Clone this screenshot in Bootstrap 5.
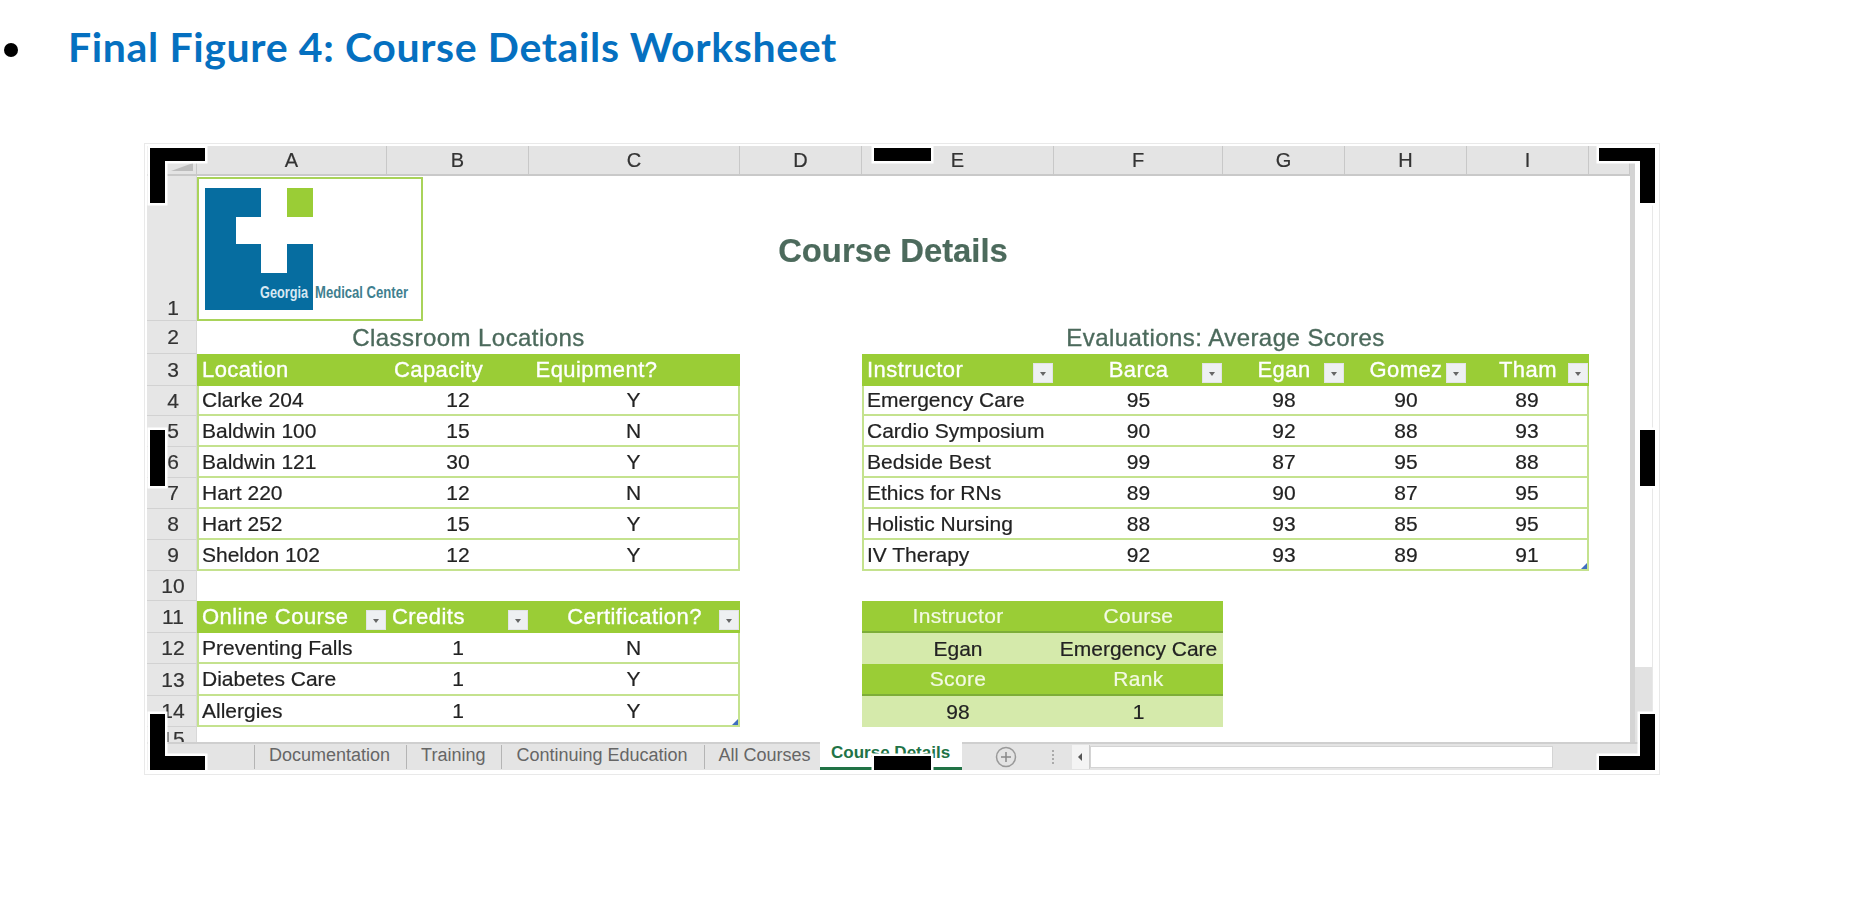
<!DOCTYPE html>
<html lang="en">
<head>
<meta charset="utf-8">
<title>Final Figure 4: Course Details Worksheet</title>
<link href="https://cdn.jsdelivr.net/npm/bootstrap@5.3.0/dist/css/bootstrap.min.css" rel="stylesheet">
<style>
body{background:#fff;font-family:"Liberation Sans",Arial,sans-serif;overflow:hidden}
.doc-title{height:143px;padding-top:19px}
.doc-bullet{width:14px;height:14px;margin:24px 0 0 4px;background:#000;flex:none}
.doc-head{margin:0 0 0 50px;font:700 41px/56px Lato,sans-serif;letter-spacing:.63px;color:#0570c0;white-space:nowrap}
.shot-frame{margin-left:144px;width:1516px;height:632px;border:1px solid #e9e9e9;padding:2px 0 5px 2px;background:#fff}
.shot-blur{filter:blur(.45px)}
.sheet-view{width:1488px;height:596px;overflow:hidden;border-right:5px solid #d4d4d4;flex:none}
.sheet-grid{border-collapse:separate;border-spacing:0;table-layout:fixed;width:1483px;font-size:21px;color:#222;-webkit-text-stroke:.2px currentColor}
.sheet-grid td,.sheet-grid th{padding:0;height:31px;line-height:24px;white-space:nowrap;overflow:hidden;font-weight:400}
.c-rh{width:50px}.c-a{width:190px}.c-b{width:142px}.c-c{width:211px}.c-d{width:122px}.c-e{width:192px}.c-f{width:169px}.c-g{width:122px}.c-h{width:122px}.c-i{width:122px}.c-x{width:41px}
.sheet-grid .col-hd{height:30px;background:#e4e4e4;border-right:1px solid #c8c8c8;border-bottom:2px solid #c9c9c9;text-align:center;font-size:20px;color:#333;position:relative}
.corner-tri{position:absolute;right:3px;bottom:3px;border-style:solid;border-width:0 0 8px 22px;border-color:transparent transparent #bdbdbd transparent}
.sheet-grid .row-hd{background:#e6e6e6;border-bottom:1px solid #d2d2d2;border-right:1px solid #d8d8d8;text-align:center;padding-left:3px;font-size:21px;color:#333}
.row-logo td{height:145px!important}
.row-30 td{height:30px!important}
.row-32 td{height:32px!important}
.row-33 td{height:33px!important}
.row-cut td{height:17px!important;vertical-align:top}
.sheet-grid .sheet-title{font-size:32.8px;font-weight:700;color:#4c6a5c;vertical-align:middle;padding-top:4px}
.sec-title{font-size:24px;letter-spacing:.45px;color:#4c6a5c;-webkit-text-stroke:.35px currentColor}
.tb-h{background:#9acd36;color:#fff;font-size:22px;letter-spacing:.45px;-webkit-text-stroke:.35px currentColor}
.sheet-grid .lead-cell{padding-left:5px}
.sheet-grid .shift-b{padding-right:39px}
.sheet-grid .shift-c{padding-right:76px}
.tb-c{border-bottom:2px solid #c4e28e}
.tb-l{border-left:2px solid #c4e28e}
.tb-r{border-right:2px solid #c4e28e}
.sheet-grid .tb-p{padding-left:3px}
.card-h{background:#9acd36;color:#f3f9e4;font-size:21px;letter-spacing:.35px;border-bottom:2px solid #7dad38}
.card-d{background:#d5eaab;color:#222}
.flt-cell{position:relative}
.flt-btn{position:absolute;right:1px;bottom:3px;width:20px;height:20px;background:#eef0f2;border:1px solid #e2e4e6}
.flt-btn::after{content:"";position:absolute;left:6px;top:8px;border:3.5px solid transparent;border-top:4px solid #666;border-bottom:0}
.tri-corner{position:absolute;right:0;bottom:0;border-style:solid;border-width:0 0 6px 6px;border-color:transparent transparent #3f6fc0 transparent}
.scroll-col{width:18px;background:#e2e2e2;height:596px;flex:none;border-right:1px solid #e8e8e8}
.scroll-thumb{height:521px;background:#fff}
.tab-bar{height:28px;width:1506px;background:#e4e4e4;border-top:2px solid #cfcfcf;padding-left:107px;font-size:18px;color:#666}
.tab-item{height:24px;padding:0 16px 0 14px;border-left:1px solid #b4b4b4;line-height:20px;white-space:nowrap}
.tab-on{height:28px;margin-top:-2px;width:142px;background:#fff;border-bottom:3px solid #217346;color:#217346;font-size:17px;font-weight:700;line-height:22px;text-align:center;white-space:nowrap;flex:none;margin-left:-7px}
.tab-add{width:22px;height:22px;margin-left:33px;flex:none}
.tab-dots{width:3px;height:14px;margin-left:35px;border-left:2px dotted #aaa;flex:none}
.tab-left{width:18px;height:24px;margin-left:17px;background:#f4f4f4;flex:none;border-right:1px solid #ccc}
.tab-track{width:463px;height:22px;background:#fff;border:1px solid #d4d4d4;flex:none}
.logo-layer{left:52px;top:33px}
.hand-layer{position:absolute;left:-1px;top:-1px;width:1516px;height:632px;pointer-events:none;overflow:visible}
</style>
</head>
<body>
<div class="doc-title d-flex align-items-start">
  <span class="doc-bullet rounded-circle"></span>
  <h1 class="doc-head">Final Figure 4: Course Details Worksheet</h1>
</div>

<div class="shot-frame position-relative">
  <div class="shot-blur">
    <div class="d-flex">
      <div class="sheet-view">
        <table class="sheet-grid position-relative">
          <colgroup><col class="c-rh"><col class="c-a"><col class="c-b"><col class="c-c"><col class="c-d"><col class="c-e"><col class="c-f"><col class="c-g"><col class="c-h"><col class="c-i"><col class="c-x"></colgroup>
          <tr><th class="col-hd"><span class="corner-tri"></span></th><th class="col-hd">A</th><th class="col-hd">B</th><th class="col-hd">C</th><th class="col-hd">D</th><th class="col-hd">E</th><th class="col-hd">F</th><th class="col-hd">G</th><th class="col-hd">H</th><th class="col-hd">I</th><th class="col-hd"></th></tr>
          <tr class="row-logo">
            <td class="row-hd align-bottom">1</td>
            <td colspan="9" class="sheet-title text-center">Course Details</td><td></td>
          </tr>
          <tr class="row-33">
            <td class="row-hd">2</td><td colspan="3" class="sec-title text-center">Classroom Locations</td><td></td><td colspan="5" class="sec-title text-center">Evaluations: Average Scores</td><td></td>
          </tr>
          <tr class="row-32">
            <td class="row-hd">3</td><td class="tb-h lead-cell">Location</td><td class="tb-h text-center shift-b">Capacity</td><td class="tb-h text-center shift-c">Equipment?</td><td></td>
            <td class="tb-h lead-cell flt-cell">Instructor<span class="flt-btn"></span></td><td class="tb-h text-center flt-cell">Barca<span class="flt-btn"></span></td><td class="tb-h text-center flt-cell">Egan<span class="flt-btn"></span></td><td class="tb-h text-center flt-cell">Gomez<span class="flt-btn"></span></td><td class="tb-h text-center flt-cell">Tham<span class="flt-btn"></span></td><td></td>
          </tr>
          <tr class="row-30">
            <td class="row-hd">4</td><td class="tb-c tb-l tb-p">Clarke 204</td><td class="tb-c text-center">12</td><td class="tb-c tb-r text-center">Y</td><td></td>
            <td class="tb-c tb-l tb-p">Emergency Care</td><td class="tb-c text-center">95</td><td class="tb-c text-center">98</td><td class="tb-c text-center">90</td><td class="tb-c tb-r text-center">89</td><td></td>
          </tr>
          <tr>
            <td class="row-hd">5</td><td class="tb-c tb-l tb-p">Baldwin 100</td><td class="tb-c text-center">15</td><td class="tb-c tb-r text-center">N</td><td></td>
            <td class="tb-c tb-l tb-p">Cardio Symposium</td><td class="tb-c text-center">90</td><td class="tb-c text-center">92</td><td class="tb-c text-center">88</td><td class="tb-c tb-r text-center">93</td><td></td>
          </tr>
          <tr>
            <td class="row-hd">6</td><td class="tb-c tb-l tb-p">Baldwin 121</td><td class="tb-c text-center">30</td><td class="tb-c tb-r text-center">Y</td><td></td>
            <td class="tb-c tb-l tb-p">Bedside Best</td><td class="tb-c text-center">99</td><td class="tb-c text-center">87</td><td class="tb-c text-center">95</td><td class="tb-c tb-r text-center">88</td><td></td>
          </tr>
          <tr>
            <td class="row-hd">7</td><td class="tb-c tb-l tb-p">Hart 220</td><td class="tb-c text-center">12</td><td class="tb-c tb-r text-center">N</td><td></td>
            <td class="tb-c tb-l tb-p">Ethics for RNs</td><td class="tb-c text-center">89</td><td class="tb-c text-center">90</td><td class="tb-c text-center">87</td><td class="tb-c tb-r text-center">95</td><td></td>
          </tr>
          <tr>
            <td class="row-hd">8</td><td class="tb-c tb-l tb-p">Hart 252</td><td class="tb-c text-center">15</td><td class="tb-c tb-r text-center">Y</td><td></td>
            <td class="tb-c tb-l tb-p">Holistic Nursing</td><td class="tb-c text-center">88</td><td class="tb-c text-center">93</td><td class="tb-c text-center">85</td><td class="tb-c tb-r text-center">95</td><td></td>
          </tr>
          <tr>
            <td class="row-hd">9</td><td class="tb-c tb-l tb-p">Sheldon 102</td><td class="tb-c text-center">12</td><td class="tb-c tb-r text-center">Y</td><td></td>
            <td class="tb-c tb-l tb-p">IV Therapy</td><td class="tb-c text-center">92</td><td class="tb-c text-center">93</td><td class="tb-c text-center">89</td><td class="tb-c tb-r text-center position-relative">91<span class="tri-corner"></span></td><td></td>
          </tr>
          <tr class="row-30"><td class="row-hd">10</td><td colspan="10"></td></tr>
          <tr class="row-32">
            <td class="row-hd">11</td><td class="tb-h lead-cell flt-cell">Online Course<span class="flt-btn"></span></td><td class="tb-h lead-cell flt-cell">Credits<span class="flt-btn"></span></td><td class="tb-h text-center flt-cell">Certification?<span class="flt-btn"></span></td><td></td>
            <td class="card-h text-center">Instructor</td><td class="card-h text-center">Course</td><td colspan="4"></td>
          </tr>
          <tr>
            <td class="row-hd">12</td><td class="tb-c tb-l tb-p">Preventing Falls</td><td class="tb-c text-center">1</td><td class="tb-c tb-r text-center">N</td><td></td>
            <td class="card-d text-center">Egan</td><td class="card-d text-center">Emergency Care</td><td colspan="4"></td>
          </tr>
          <tr class="row-32">
            <td class="row-hd">13</td><td class="tb-c tb-l tb-p">Diabetes Care</td><td class="tb-c text-center">1</td><td class="tb-c tb-r text-center">Y</td><td></td>
            <td class="card-h text-center">Score</td><td class="card-h text-center">Rank</td><td colspan="4"></td>
          </tr>
          <tr>
            <td class="row-hd">14</td><td class="tb-c tb-l tb-p">Allergies</td><td class="tb-c text-center">1</td><td class="tb-c tb-r text-center position-relative">Y<span class="tri-corner"></span></td><td></td>
            <td class="card-d text-center">98</td><td class="card-d text-center">1</td><td colspan="4"></td>
          </tr>
          <tr class="row-cut"><td class="row-hd">15</td><td colspan="10"></td></tr>
        </table>
      </div>
      <div class="scroll-col"><div class="scroll-thumb"></div></div>
    </div>

    <div class="tab-bar d-flex align-items-center">
      <span class="tab-item">Documentation</span>
      <span class="tab-item">Training</span>
      <span class="tab-item">Continuing Education</span>
      <span class="tab-item">All Courses</span>
      <span class="tab-on">Course Details</span>
      <svg class="tab-add" viewBox="0 0 22 22"><circle cx="11" cy="11" r="9.5" fill="none" stroke="#999" stroke-width="1.5"/><path d="M11 6v10M6 11h10" stroke="#888" stroke-width="1.5"/></svg>
      <span class="tab-dots"></span>
      <span class="tab-left d-flex align-items-center justify-content-center"><svg width="6" height="10" viewBox="0 0 6 10"><path d="M5 1 1 5l4 4z" fill="#555"/></svg></span>
      <span class="tab-track"></span>
    </div>
  </div>

  <svg class="logo-layer position-absolute overflow-visible" width="226" height="144" viewBox="197 177 226 144">
    <rect x="198" y="178" width="224" height="142" fill="#fff" stroke="#a9d35a" stroke-width="2"/>
    <path d="M205 188h56v29h-25v27h25v29h26v-29h26v66h-108z" fill="#066da0"/>
    <rect x="287" y="188" width="26" height="29" fill="#9acd36"/>
    <text x="260" y="298" font-family="Liberation Sans Narrow, Liberation Sans, sans-serif" font-size="16" font-weight="700" fill="#d7e8f2" textLength="48" lengthAdjust="spacingAndGlyphs">Georgia</text>
    <text x="315" y="298" font-family="Liberation Sans Narrow, Liberation Sans, sans-serif" font-size="16" font-weight="700" fill="#3f7f8f" textLength="93" lengthAdjust="spacingAndGlyphs">Medical Center</text>
  </svg>

  <svg class="hand-layer" viewBox="144 143 1516 632">
    <g fill="#000" stroke="#fff" stroke-width="5" paint-order="stroke">
      <path d="M150 148h55v13h-40v42h-15z"/>
      <path d="M1599 148h56v55h-15v-42h-41z"/>
      <path d="M150 714h15v42h40v14h-55z"/>
      <path d="M1640 714h15v56h-56v-14h41z"/>
      <rect x="874" y="148" width="57" height="13"/>
      <rect x="874" y="756" width="57" height="14"/>
      <rect x="150" y="430" width="15" height="56"/>
      <rect x="1640" y="430" width="15" height="56"/>
    </g>
  </svg>
</div>
<script src="https://cdn.jsdelivr.net/npm/bootstrap@5.3.0/dist/js/bootstrap.bundle.min.js"></script>
</body>
</html>
